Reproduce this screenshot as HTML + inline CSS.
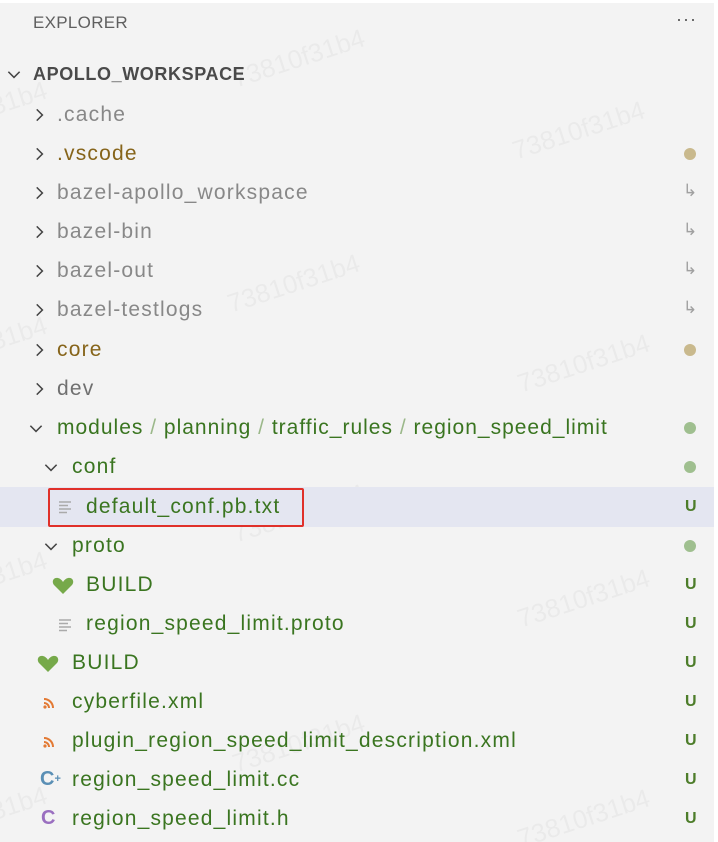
<!DOCTYPE html>
<html><head><meta charset="utf-8"><style>
html,body{margin:0;padding:0;background:#fff;}
#p{position:absolute;left:0;top:3px;width:714px;height:839px;background:#f3f3f3;overflow:hidden;font-family:"Liberation Sans",sans-serif;}
.r{position:absolute;left:0;width:714px;height:39px;}
.t{position:absolute;top:8px;font-size:21px;letter-spacing:1.2px;line-height:22px;white-space:nowrap;}
.g{color:#3a7520;}
.y{color:#86641a;}
.d{color:#888;}
.dv{color:#707070;}
.ch{position:absolute;top:10px;width:18px;height:18px;}
.dot{position:absolute;left:684px;top:13px;width:12px;height:12px;border-radius:50%;}
.U{position:absolute;left:685px;top:10px;font-size:16px;font-weight:bold;color:#4d7d2a;}
.lk{position:absolute;left:683px;top:7px;font-size:17px;color:#a0a0a0;}
.wm{position:absolute;color:rgba(0,0,0,0.035);font-size:26px;transform:rotate(-18deg);}
</style></head><body><div id="p">
<div style="position:absolute;left:33px;top:10px;font-size:17px;color:#5f5f5f;letter-spacing:0.3px">EXPLORER</div>
<div style="position:absolute;left:676px;top:6px;font-size:18px;color:#555;letter-spacing:1px;">···</div>

<div class="wm" style="left:230px;top:40px">73810f31b4</div>
<div class="wm" style="left:510px;top:112px">73810f31b4</div>
<div class="wm" style="left:225px;top:265px">73810f31b4</div>
<div class="wm" style="left:515px;top:345px">73810f31b4</div>
<div class="wm" style="left:230px;top:495px">73810f31b4</div>
<div class="wm" style="left:515px;top:580px">73810f31b4</div>
<div class="wm" style="left:230px;top:725px">73810f31b4</div>
<div class="wm" style="left:515px;top:800px">73810f31b4</div>
<div class="wm" style="left:-10px;top:80px">31b4</div>
<div class="wm" style="left:-10px;top:315px">31b4</div>
<div class="wm" style="left:-10px;top:550px">31b4</div>
<div class="wm" style="left:-10px;top:785px">31b4</div>

<div class="r" style="top:52px"><svg class="ch" style="left:5px" viewBox="0 0 16 16"><path d="M3 6l5 5 5-5" fill="none" stroke="#444" stroke-width="1.4"/></svg><div class="t" style="left:33px;font-weight:bold;font-size:18px;letter-spacing:0.6px;color:#4a4a4a">APOLLO_WORKSPACE</div></div>

<div class="r" style="top:93px"><svg class="ch" style="left:30px" viewBox="0 0 16 16"><path d="M6 3l5 5-5 5" fill="none" stroke="#444" stroke-width="1.4"/></svg><div class="t d" style="left:57px">.cache</div></div>
<div class="r" style="top:132px"><svg class="ch" style="left:30px" viewBox="0 0 16 16"><path d="M6 3l5 5-5 5" fill="none" stroke="#444" stroke-width="1.4"/></svg><div class="t y" style="left:57px">.vscode</div><div class="dot" style="background:#c9b98d"></div></div>
<div class="r" style="top:171px"><svg class="ch" style="left:30px" viewBox="0 0 16 16"><path d="M6 3l5 5-5 5" fill="none" stroke="#444" stroke-width="1.4"/></svg><div class="t d" style="left:57px">bazel-apollo_workspace</div><div class="lk">↳</div></div>
<div class="r" style="top:210px"><svg class="ch" style="left:30px" viewBox="0 0 16 16"><path d="M6 3l5 5-5 5" fill="none" stroke="#444" stroke-width="1.4"/></svg><div class="t d" style="left:57px">bazel-bin</div><div class="lk">↳</div></div>
<div class="r" style="top:249px"><svg class="ch" style="left:30px" viewBox="0 0 16 16"><path d="M6 3l5 5-5 5" fill="none" stroke="#444" stroke-width="1.4"/></svg><div class="t d" style="left:57px">bazel-out</div><div class="lk">↳</div></div>
<div class="r" style="top:288px"><svg class="ch" style="left:30px" viewBox="0 0 16 16"><path d="M6 3l5 5-5 5" fill="none" stroke="#444" stroke-width="1.4"/></svg><div class="t d" style="left:57px">bazel-testlogs</div><div class="lk">↳</div></div>
<div class="r" style="top:328px"><svg class="ch" style="left:30px" viewBox="0 0 16 16"><path d="M6 3l5 5-5 5" fill="none" stroke="#444" stroke-width="1.4"/></svg><div class="t y" style="left:57px">core</div><div class="dot" style="background:#c9b98d"></div></div>
<div class="r" style="top:367px"><svg class="ch" style="left:30px" viewBox="0 0 16 16"><path d="M6 3l5 5-5 5" fill="none" stroke="#444" stroke-width="1.4"/></svg><div class="t dv" style="left:57px">dev</div></div>
<div class="r" style="top:406px"><svg class="ch" style="left:27px" viewBox="0 0 16 16"><path d="M3 6l5 5 5-5" fill="none" stroke="#444" stroke-width="1.4"/></svg><div class="t g" style="left:57px;letter-spacing:1px">modules<span style="color:#9bb88a"> / </span>planning<span style="color:#9bb88a"> / </span>traffic_rules<span style="color:#9bb88a"> / </span>region_speed_limit</div><div class="dot" style="background:#9fbf8f"></div></div>
<div class="r" style="top:445px"><svg class="ch" style="left:42px" viewBox="0 0 16 16"><path d="M3 6l5 5 5-5" fill="none" stroke="#444" stroke-width="1.4"/></svg><div class="t g" style="left:72px">conf</div><div class="dot" style="background:#9fbf8f"></div></div>
<div class="r" style="top:484px;background:#e4e6f1;height:40px"><div style="position:absolute;left:48px;top:1px;width:252px;height:35px;border:2px solid #e0302a;border-radius:2px"></div><svg style="position:absolute;left:58px;top:13px" width="14" height="14" viewBox="0 0 14 14"><path d="M1 2h12M1 5.5h9M1 9h12M1 12.5h8" stroke="#aaa" stroke-width="1.5"/></svg><div class="t g" style="left:86px;top:9px">default_conf.pb.txt</div><div class="U" style="top:11px">U</div></div>
<div class="r" style="top:524px"><svg class="ch" style="left:42px" viewBox="0 0 16 16"><path d="M3 6l5 5 5-5" fill="none" stroke="#444" stroke-width="1.4"/></svg><div class="t g" style="left:72px">proto</div><div class="dot" style="background:#9fbf8f"></div></div>
<div class="r" style="top:563px"><svg style="position:absolute;left:52px;top:11px" width="22" height="18" viewBox="0 0 22 18"><path d="M11 17L2 8C-1 4 2 0 6 1c2 .5 4 2 5 4 1-2 3-3.5 5-4 4-1 7 3 4 7z" fill="#76a94a"/></svg><div class="t g" style="left:86px">BUILD</div><div class="U">U</div></div>
<div class="r" style="top:602px"><svg style="position:absolute;left:58px;top:13px" width="14" height="14" viewBox="0 0 14 14"><path d="M1 2h12M1 5.5h9M1 9h12M1 12.5h8" stroke="#aaa" stroke-width="1.5"/></svg><div class="t g" style="left:86px">region_speed_limit.proto</div><div class="U">U</div></div>
<div class="r" style="top:641px"><svg style="position:absolute;left:37px;top:11px" width="22" height="18" viewBox="0 0 22 18"><path d="M11 17L2 8C-1 4 2 0 6 1c2 .5 4 2 5 4 1-2 3-3.5 5-4 4-1 7 3 4 7z" fill="#76a94a"/></svg><div class="t g" style="left:72px">BUILD</div><div class="U">U</div></div>
<div class="r" style="top:680px"><svg style="position:absolute;left:42px;top:13px" width="14" height="14" viewBox="0 0 14 14"><path d="M2 3a9 9 0 0 1 9 9M2 7a5 5 0 0 1 5 5" fill="none" stroke="#e37933" stroke-width="2"/><circle cx="3" cy="11" r="1.6" fill="#e37933"/></svg><div class="t g" style="left:72px">cyberfile.xml</div><div class="U">U</div></div>
<div class="r" style="top:719px"><svg style="position:absolute;left:42px;top:13px" width="14" height="14" viewBox="0 0 14 14"><path d="M2 3a9 9 0 0 1 9 9M2 7a5 5 0 0 1 5 5" fill="none" stroke="#e37933" stroke-width="2"/><circle cx="3" cy="11" r="1.6" fill="#e37933"/></svg><div class="t g" style="left:72px">plugin_region_speed_limit_description.xml</div><div class="U">U</div></div>
<div class="r" style="top:758px"><div style="position:absolute;left:40px;top:7px;font-size:20px;font-weight:bold;color:#5a8fb5">C<span style="font-size:11px;position:relative;top:-3px">+</span></div><div class="t g" style="left:72px">region_speed_limit.cc</div><div class="U">U</div></div>
<div class="r" style="top:797px"><div style="position:absolute;left:41px;top:7px;font-size:20px;font-weight:bold;color:#9a6fc0">C</div><div class="t g" style="left:72px">region_speed_limit.h</div><div class="U">U</div></div>
</div></body></html>
